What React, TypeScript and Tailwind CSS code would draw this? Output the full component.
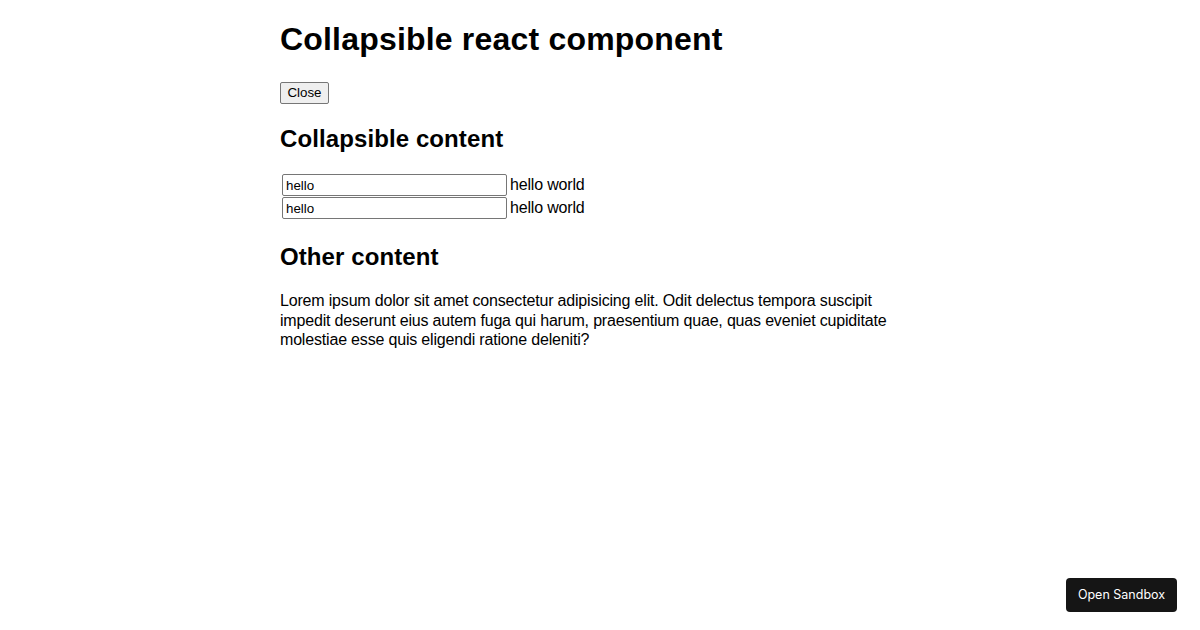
import { useState } from 'react';

const App = () => {
  const [open, setOpen] = useState(true);
  const rows = ['hello', 'hello'];

  return (
    <div className="min-h-[630px] bg-white text-black font-['Liberation_Sans',Arial,sans-serif]">
      <div className="mx-auto w-[640px] pt-[21px]">
        <h1 className="text-[32px] font-bold leading-[37px] tracking-[0.19px] mb-[22px]">Collapsible react component</h1>

        <button
          onClick={() => setOpen(!open)}
          className="h-[22px] w-[49px] text-[13.33px] leading-none bg-[#efefef] border border-[#767676] rounded-[2px]"
        >
          {open ? 'Close' : 'Open'}
        </button>

        {open && (
          <div>
            <h2 className="mt-[21px] text-[24px] font-bold leading-[28px] tracking-[0.1px] mb-[21px]">Collapsible content</h2>
            <div className="flex flex-col gap-px pl-[2px]">
              {rows.map((r, i) => (
                <div key={i} className="flex items-center gap-[3px]">
                  <input
                    defaultValue={r}
                    className="w-[225px] h-[22px] px-[3px] text-[13.33px] border border-[#767676] rounded-[2px]"
                  />
                  <span className="text-[16px] leading-[22px] tracking-[-0.18px]">hello world</span>
                </div>
              ))}
            </div>
          </div>
        )}

        <h2 className="mt-[24px] text-[24px] font-bold leading-[28px] tracking-[0.1px] mb-[20px]">Other content</h2>
        <p className="text-[16px] leading-[19.5px] tracking-[-0.18px]">
          Lorem ipsum dolor sit amet consectetur adipisicing elit. Odit delectus tempora suscipit impedit deserunt eius
          autem fuga qui harum, praesentium quae, quas eveniet cupiditate molestiae esse quis eligendi ratione deleniti?
        </p>
      </div>

      <button className="fixed right-[23px] bottom-[18px] h-[34px] w-[111px] rounded-[4px] bg-[#151515] text-white text-[12.5px] font-['Inter',sans-serif]">
        Open Sandbox
      </button>
    </div>
  );
};

export default App;
